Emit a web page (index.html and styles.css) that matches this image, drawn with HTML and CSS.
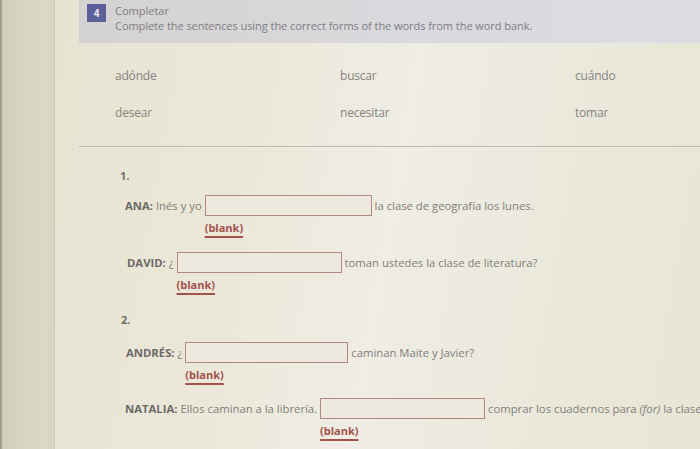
FILE: index.html
```html
<!DOCTYPE html>
<html>
<head>
<meta charset="utf-8">
<link rel="stylesheet" href="styles.css">
</head>
<body>
<div class="screen">
  <div class="gutter"></div>
  <div class="page">
    <div class="header">
      <div class="badge">4</div>
      <div class="titles">
        <div class="title">Completar</div>
        <div class="subtitle">Complete the sentences using the correct forms of the words from the word bank.</div>
      </div>
    </div>
    <div class="bank">
      <span class="w">adónde</span><span class="w">buscar</span><span class="w">cuándo</span>
      <span class="w">desear</span><span class="w">necesitar</span><span class="w">tomar</span>
    </div>
    <div class="divider"></div>
    <div class="items">
      <div class="num n1">1.</div>
      <div class="line l1"><b>ANA:</b> Inés y yo <span class="field"><span class="box b1"></span><span class="blank">(blank)</span></span> la clase de geografía los lunes.</div>
      <div class="line l2"><b>DAVID:</b> ¿ <span class="field"><span class="box b2"></span><span class="blank">(blank)</span></span> toman ustedes la clase de literatura?</div>
      <div class="num n2">2.</div>
      <div class="line l3"><b>ANDRÉS:</b> ¿ <span class="field"><span class="box b3"></span><span class="blank">(blank)</span></span> caminan Maite y Javier?</div>
      <div class="line l4"><b>NATALIA:</b> Ellos caminan a la librería. <span class="field"><span class="box b4"></span><span class="blank">(blank)</span></span> comprar los cuadernos para <i>(for)</i> la clase.</div>
    </div>
  </div>
</div>
</body>
</html>
```

FILE: styles.css
```css
html, body {
  margin: 0;
  padding: 0;
  width: 700px;
  height: 449px;
  overflow: hidden;
}
body {
  font-family: "Open Sans", "Liberation Sans", sans-serif;
  color: #7b7a78;
}
.screen {
  display: flex;
  width: 700px;
  height: 449px;
  background: linear-gradient(100deg, #e6e2cf 0%, #ebe8da 35%, #efede4 55%, #ebe9dc 75%, #e7e5d3 100%);
}
.gutter {
  width: 54px;
  flex: none;
  background: linear-gradient(90deg, #8f8a7a 0, #d3cfbd 3px, #dcd8c6 40px, #d9d5c3 54px);
  box-shadow: 1px 0 0 #cfcbb8;
}
.page {
  flex: 1;
  padding-left: 25px;
  white-space: nowrap;
  overflow: hidden;
}
.header {
  display: flex;
  align-items: flex-start;
  gap: 9px;
  height: 43px;
  box-sizing: border-box;
  padding: 4px 0 0 8px;
  background: linear-gradient(90deg, #d5d3d1 0%, #d9d8dc 50%, #dcdce2 100%);
}
.badge {
  width: 19px;
  height: 18px;
  background: #5c609a;
  color: #e8e8f2;
  font-size: 10px;
  font-weight: 700;
  display: flex;
  align-items: center;
  justify-content: center;
}
.titles {
  font-size: 11px;
  line-height: 15px;
  color: #7e7d84;
  margin-top: -1px;
}
.subtitle {
  letter-spacing: -0.05px;
}
.bank {
  display: grid;
  grid-template-columns: 225px 235px 120px;
  row-gap: 19px;
  padding: 24px 0 0 36px;
  font-size: 12px;
  line-height: 18px;
  color: #858480;
  letter-spacing: -0.2px;
}
.divider {
  margin-top: 24px;
  height: 1px;
  background: #bdbab0;
}
.items {
  font-size: 11.3px;
  color: #7f7e7a;
}
.items b {
  font-weight: 700;
  color: #6a6966;
}
.num {
  font-weight: 700;
  color: #6f6e6a;
  font-size: 11px;
  line-height: 14px;
}
.n1 { padding: 22px 0 0 41px; }
.n2 { padding: 21px 0 0 42px; }
.line {
  line-height: 21px;
  white-space: nowrap;
}
.l1 { padding: 12px 0 0 46px; }
.l2 { padding: 17px 0 0 48px; }
.l3 { padding: 15px 0 0 47px; }
.l4 { padding: 16px 0 0 46px; }
.field {
  display: inline-flex;
  flex-direction: column;
  vertical-align: top;
}
.box {
  display: block;
  height: 21px;
  border: 1px solid #b48880;
  background: #ede9de;
  box-sizing: border-box;
}
.b1 { width: 167px; }
.b2 { width: 165px; }
.b3 { width: 163px; }
.b4 { width: 165px; }
.blank {
  align-self: flex-start;
  margin-top: 5px;
  line-height: 14px;
  font-weight: 700;
  font-size: 11px;
  color: #a3524c;
  text-decoration: underline;
  text-underline-offset: 4px;
  text-decoration-thickness: 1.5px;
}
```
